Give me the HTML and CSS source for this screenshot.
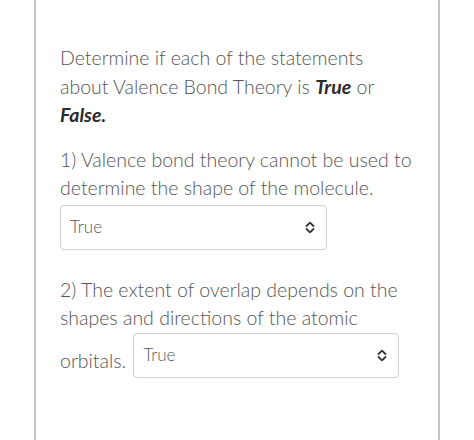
FILE: index.html
```html
<!DOCTYPE html>
<html>
<head>
<meta charset="utf-8">
<link rel="stylesheet" href="styles.css">
</head>
<body>
<div class="card">
  <p class="intro">Determine if each of the statements about Valence Bond Theory is <strong><em>True</em></strong> or <strong><em>False.</em></strong></p>
  <div class="question">
    <p class="stmt">1) Valence bond theory cannot be used to determine the shape of the molecule.</p>
    <div class="select"><span class="val">True</span><svg class="chev" width="10" height="13" viewBox="0 0 10 13"><path d="M1.5 5 L5 1.6 L8.5 5 M1.5 8 L5 11.4 L8.5 8" fill="none" stroke="#333" stroke-width="1.8" stroke-linecap="round" stroke-linejoin="round"/></svg></div>
  </div>
  <div class="question q2">
    <p class="stmt">2) The extent of overlap depends on the shapes and directions of the atomic orbitals. <span class="select inline"><span class="val">True</span><svg class="chev" width="10" height="13" viewBox="0 0 10 13"><path d="M1.5 5 L5 1.6 L8.5 5 M1.5 8 L5 11.4 L8.5 8" fill="none" stroke="#333" stroke-width="1.8" stroke-linecap="round" stroke-linejoin="round"/></svg></span></p>
  </div>
</div>
</body>
</html>
```
FILE: styles.css
```css
html, body {
  margin: 0;
  padding: 0;
  background: #fff;
}
body {
  font-family: Lato, "Noto Sans", sans-serif;
  font-weight: 300;
  color: #555;
  font-size: 19.5px;
  line-height: 28.5px;
}
.card {
  margin-left: 34px;
  width: 406px;
  height: 440px;
  box-sizing: border-box;
  border-left: 2px solid #c4c4c4;
  border-right: 2px solid #c4c4c4;
  padding: 44px 26px 0 24px;
}
p {
  margin: 0;
}
.intro strong {
  color: #2b2b2b;
  font-weight: 700;
}
.question {
  margin-top: 16px;
}
.q2 {
  margin-top: 26px;
}
.select {
  display: flex;
  align-items: center;
  justify-content: space-between;
  box-sizing: border-box;
  width: 267px;
  height: 45px;
  margin-top: 2px;
  padding: 0 11px 0 9px;
  border: 1px solid #cfcfcf;
  border-radius: 4px;
  background: #fff;
  font-size: 17px;
  font-weight: 300;
  color: #555;
  line-height: 24px;
}
.select.inline {
  display: inline-flex;
  vertical-align: 7px;
  margin-top: 0;
  margin-left: 2px;
  width: 266px;
}
.select .val {
  margin-top: -1px;
}
.chev {
  display: block;
}
```
